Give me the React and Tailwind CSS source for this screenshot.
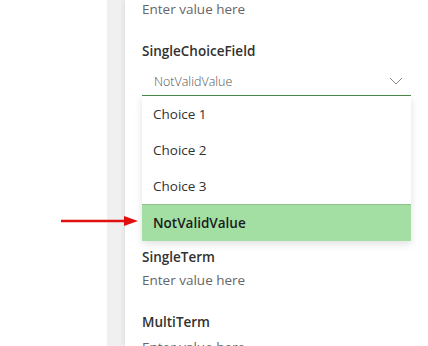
export default function App() {
  const font = { fontFamily: '"Open Sans", "Noto Sans", sans-serif' };
  return (
    <div className="w-[428px] h-[346px] overflow-hidden bg-white flex relative" style={font}>
      <div className="w-[107px] shrink-0 bg-white" />
      <div className="w-[18px] shrink-0 bg-[#f0f0f0]" />
      <div className="flex-1 bg-white shadow-[-2px_0_4px_rgba(0,0,0,0.06)] pl-[17px] pr-[17px] flex flex-col">
        <div className="shrink-0 -mt-[1px] h-[20px] text-[13.5px] leading-[20px] text-[#666]">Enter value here</div>
        <div className="shrink-0 mt-[22px] h-[20px] text-[13.5px] leading-[20px] font-semibold text-[#323130]">SingleChoiceField</div>
        <div className="shrink-0 mt-[8px] h-[27px] border-b border-[#4b8a4b] flex items-center justify-between pl-[12px] pr-[8px]">
          <span className="text-[12.5px] text-[#555] font-light">NotValidValue</span>
          <svg width="14" height="10" viewBox="0 0 14 10" className="mb-[2px]">
            <path d="M1 2 L7 8 L13 2" fill="none" stroke="#8a8a8a" strokeWidth="1" />
          </svg>
        </div>
        <div className="shrink-0 shadow-[0_3px_8px_rgba(0,0,0,0.12)] bg-white flex flex-col">
          <div className="h-[36px] flex items-center pl-[11px] text-[13.5px] text-[#323130]">Choice 1</div>
          <div className="h-[36px] flex items-center pl-[11px] text-[13.5px] text-[#323130]">Choice 2</div>
          <div className="h-[36px] flex items-center pl-[11px] text-[13.5px] text-[#323130]">Choice 3</div>
          <div className="h-[37px] flex items-center pl-[11px] text-[13.5px] font-semibold text-[#1b1b1b] bg-[#a3dfa3] border-t border-[#8fbf8f]">NotValidValue</div>
        </div>
        <div className="shrink-0 mt-[6px] h-[20px] text-[13.5px] leading-[20px] font-semibold text-[#323130]">SingleTerm</div>
        <div className="shrink-0 mt-[3px] h-[20px] text-[13.5px] leading-[20px] text-[#666]">Enter value here</div>
        <div className="shrink-0 mt-[22px] h-[20px] text-[13.5px] leading-[20px] font-semibold text-[#323130]">MultiTerm</div>
        <div className="shrink-0 mt-[5px] h-[20px] text-[13.5px] leading-[20px] text-[#666]">Enter value here</div>
      </div>
      <svg className="absolute left-[60px] top-[213px]" width="80" height="16" viewBox="0 0 80 16">
        <path d="M1 8 L66 8" stroke="#e01010" strokeWidth="2.5" />
        <path d="M64 3 L78 8 L64 13 Z" fill="#e01010" />
      </svg>
    </div>
  );
}
